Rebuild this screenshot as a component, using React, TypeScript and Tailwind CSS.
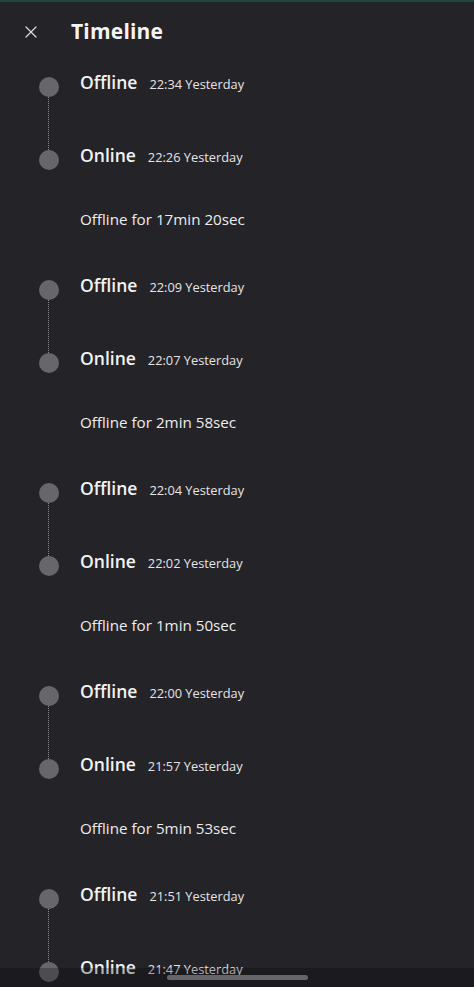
import { X } from "lucide-react";

type Pair = { off: string; on: string; gap: string | null };

const pairs: Pair[] = [
  { off: "22:34", on: "22:26", gap: "17min 20sec" },
  { off: "22:09", on: "22:07", gap: "2min 58sec" },
  { off: "22:04", on: "22:02", gap: "1min 50sec" },
  { off: "22:00", on: "21:57", gap: "5min 53sec" },
  { off: "21:51", on: "21:47", gap: null },
];

function EventRow({ label, time, first, height }: { label: string; time: string; first: boolean; height: string }) {
  return (
    <div className={`flex ${height}`}>
      <div className="relative w-[80px] shrink-0">
        {first ? (
          <div className="absolute left-[48px] top-[36px] h-[73px] border-l border-dotted border-[#8a898e]" />
        ) : null}
        <div className="absolute left-[39px] top-[26px] h-[20px] w-[20px] rounded-full bg-[#67666b]" />
      </div>
      <div className="flex items-baseline pt-[21px]">
        <span className="text-[17.5px] font-semibold leading-[20px] text-[#f2f2f2]">{label}</span>
        <span className="ml-[12px] text-[12.8px] leading-[20px] text-[#e4e4e6]">{time} Yesterday</span>
      </div>
    </div>
  );
}

export default function App() {
  return (
    <div
      className="relative h-[987px] w-[474px] overflow-hidden bg-[#242328]"
      style={{ fontFamily: '"Open Sans", "Noto Sans", sans-serif' }}
    >
      <div className="h-[2px] bg-[#1b4a38]" />
      <header className="flex h-[49px] items-center pt-[11px]">
        <div className="flex w-[62px] justify-center">
          <X size={20} strokeWidth={1.5} className="text-[#d8d8da]" />
        </div>
        <h1 className="ml-[9px] text-[21px] font-bold tracking-[0.2px] text-[#f4f4f4]">Timeline</h1>
      </header>

      <div className="flex flex-col">
        {pairs.map((p) => (
          <div key={p.off} className="flex flex-col">
            <EventRow label="Offline" time={p.off} first={true} height="h-[73px]" />
            <EventRow label="Online" time={p.on} first={false} height="h-[72px]" />
            {p.gap ? (
              <div className="flex h-[58px] pl-[80px] pt-[13px]">
                <span className="text-[15.2px] leading-[20px] text-[#ececee]">Offline for {p.gap}</span>
              </div>
            ) : null}
          </div>
        ))}
      </div>

      <div className="fixed bottom-0 left-0 flex h-[19px] w-[474px] items-center justify-center bg-black/25">
        <div className="h-[5px] w-[141px] rounded-full bg-[#66656a]" />
      </div>
    </div>
  );
}
